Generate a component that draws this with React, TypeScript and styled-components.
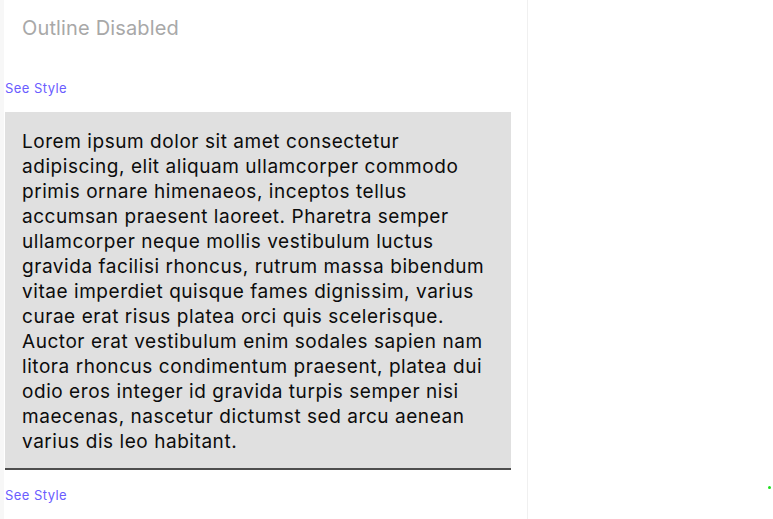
import React from "react";
import styled, { createGlobalStyle } from "styled-components";

const GlobalStyle = createGlobalStyle`
  html, body {
    margin: 0;
    padding: 0;
    background: #ffffff;
    font-family: "Inter", "Noto Sans", sans-serif;
  }
`;

const Page = styled.div`
  display: flex;
  height: 519px;
  overflow: hidden;
  border-left: 4px solid #f7f7f7;
`;

const Column = styled.div`
  width: 522px;
  border-right: 1px solid #f0f0f0;
  padding-left: 1px;
  display: flex;
  flex-direction: column;
`;

const DisabledTitle = styled.div`
  padding: 15px 17px 0;
  height: 30px;
  font-size: 20px;
  line-height: 26px;
  letter-spacing: 0.15px;
  color: #a8a8a8;
`;

const StyleLink = styled.a<{ $top: number }>`
  display: block;
  margin-top: ${(p) => p.$top}px;
  font-size: 13px;
  line-height: 16px;
  color: #6a5cff;
  letter-spacing: 0.45px;
  cursor: pointer;
`;

const TextBlock = styled.div`
  margin-top: 16px;
  width: 506px;
  box-sizing: border-box;
  padding: 17px 17px 14px;
  background: #e0e0e0;
  border-bottom: 2px solid #4e4e4e;
  font-size: 19px;
  line-height: 25px;
  letter-spacing: 0.55px;
  color: #0c0c0c;
`;

const Canvas = styled.div`
  flex: 1;
  position: relative;
`;

const Dot = styled.span`
  position: absolute;
  left: 240px;
  top: 486px;
  width: 3px;
  height: 3px;
  border-radius: 50%;
  background: #1ee01e;
`;

const lorem =
  "Lorem ipsum dolor sit amet consectetur adipiscing, elit aliquam ullamcorper commodo primis ornare himenaeos, inceptos tellus accumsan praesent laoreet. Pharetra semper ullamcorper neque mollis vestibulum luctus gravida facilisi rhoncus, rutrum massa bibendum vitae imperdiet quisque fames dignissim, varius curae erat risus platea orci quis scelerisque. Auctor erat vestibulum enim sodales sapien nam litora rhoncus condimentum praesent, platea dui odio eros integer id gravida turpis semper nisi maecenas, nascetur dictumst sed arcu aenean varius dis leo habitant.";

export default function App() {
  return (
    <>
      <GlobalStyle />
      <Page>
        <Column>
          <DisabledTitle>Outline Disabled</DisabledTitle>
          <StyleLink $top={35}>See Style</StyleLink>
          <TextBlock>{lorem}</TextBlock>
          <StyleLink $top={17}>See Style</StyleLink>
        </Column>
        <Canvas>
          <Dot />
        </Canvas>
      </Page>
    </>
  );
}
